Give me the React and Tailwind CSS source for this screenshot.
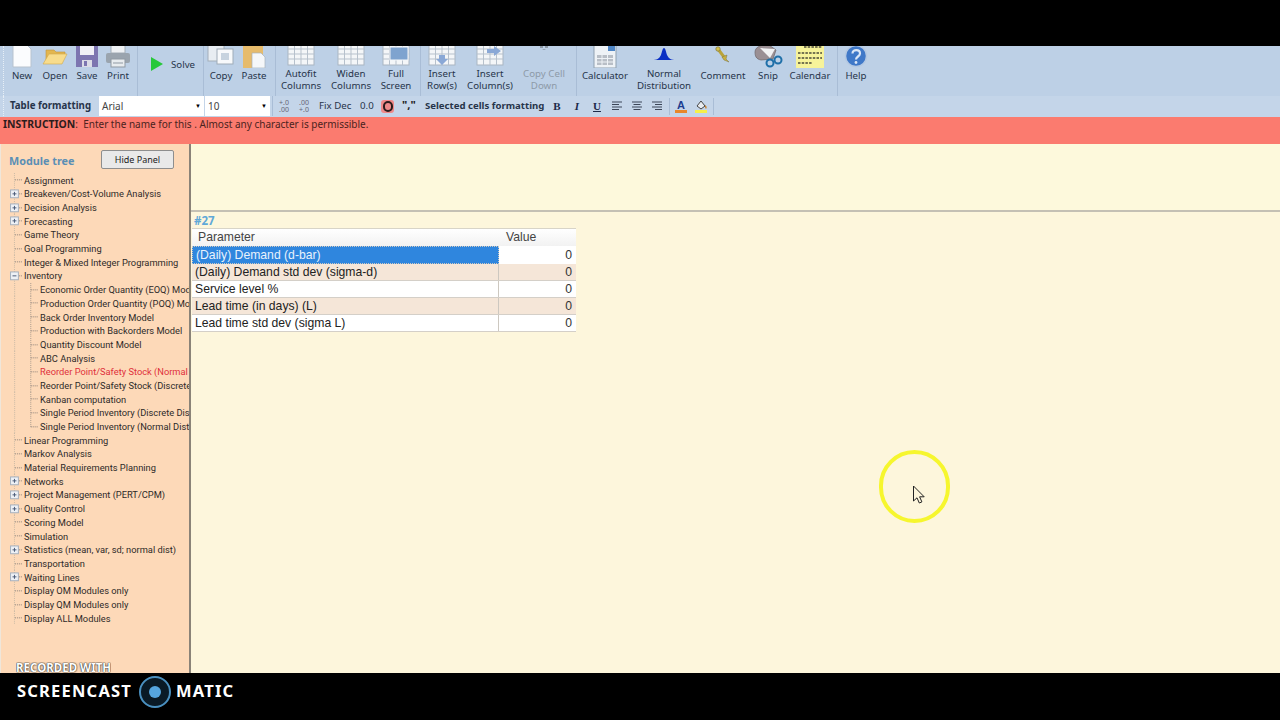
import React from "react";

const GridIcon = ({ children }) => (
  <svg viewBox="0 0 32 22" className="w-8 h-[22px]">
    <rect x="3" y="-2" width="26" height="21" fill="#f4f6f8" stroke="#aab5c2" />
    <path d="M3 3h26M3 8h26M3 13h26M9.5 -2v21M16 -2v21M22.5 -2v21" stroke="#b7c1cc" fill="none" />
    {children}
  </svg>
);

const icons = {
  new: (
    <svg viewBox="0 0 32 22" className="w-8 h-[22px]">
      <path d="M7 -2h13l5 5v18H7z" fill="#fbfcfe" stroke="#b8c3cf" />
    </svg>
  ),
  open: (
    <svg viewBox="0 0 32 22" className="w-8 h-[22px]">
      <path d="M7 18V4h8l2 2h9v4H12z" fill="#e3b64f" stroke="#c2963a" strokeWidth="0.6" />
      <path d="M4 18l6-10h18l-5 10z" fill="#f8dc8c" stroke="#d2a94c" strokeWidth="0.6" />
    </svg>
  ),
  save: (
    <svg viewBox="0 0 32 22" className="w-8 h-[22px]">
      <path d="M5 -2h22v23H5z" fill="#7d75b0" />
      <rect x="9" y="-2" width="14" height="11" fill="#f0eff6" />
      <rect x="11" y="14" width="10" height="7" fill="#dcdce6" />
      <rect x="13" y="15" width="3" height="5" fill="#7d75b0" />
    </svg>
  ),
  print: (
    <svg viewBox="0 0 32 22" className="w-8 h-[22px]">
      <rect x="9" y="-2" width="14" height="9" fill="#eef1f4" stroke="#a4adb6" />
      <rect x="4" y="7" width="24" height="10" rx="2" fill="#9aa4ae" />
      <rect x="9" y="13" width="14" height="8" fill="#e8ecef" stroke="#8f99a3" />
      <path d="M11 17h10" stroke="#8f99a3" />
    </svg>
  ),
  solve: (
    <svg viewBox="0 0 14 16" className="w-[14px] h-4">
      <path d="M1 1l12 7-12 7z" fill="#27c83a" />
    </svg>
  ),
  copy: (
    <svg viewBox="0 0 32 22" className="w-8 h-[22px]">
      <rect x="3" y="-2" width="16" height="17" fill="#e8edf2" stroke="#a3aeb9" />
      <rect x="12" y="3" width="16" height="15" fill="#f7f9fb" stroke="#a0acb8" />
      <rect x="16" y="7" width="8" height="7" fill="#c7d3df" />
    </svg>
  ),
  paste: (
    <svg viewBox="0 0 32 22" className="w-8 h-[22px]">
      <rect x="5" y="-2" width="20" height="24" fill="#e6bb6c" />
      <path d="M14 7h9l4 4v11H14z" fill="#f5f7f9" stroke="#a8b2bc" strokeWidth="0.7" />
    </svg>
  ),
  autofit: <GridIcon />,
  widen: <GridIcon />,
  full: (
    <GridIcon>
      <rect x="10" y="1" width="18" height="13" fill="#7ea3cf" stroke="#f4f6f8" />
    </GridIcon>
  ),
  insRow: (
    <GridIcon>
      <path d="M13 9h6v4h3l-6 6-6-6h3z" fill="#8aa8d6" />
    </GridIcon>
  ),
  insCol: (
    <GridIcon>
      <path d="M13 3h7V0l7 5-7 5V7h-7z" fill="#8aa8d6" />
    </GridIcon>
  ),
  copyDown: (
    <svg viewBox="0 0 32 22" className="w-8 h-[22px]">
      <path d="M12 0h3v2h-3zM17 0h3v2h-3zM14 3h4l-2 1z" fill="#8d99a6" />
    </svg>
  ),
  calc: (
    <svg viewBox="0 0 32 22" className="w-8 h-[22px]">
      <rect x="5" y="-2" width="22" height="24" fill="#eef2f6" stroke="#8fa0b0" />
      <rect x="8" y="9" width="16" height="10" fill="#b8bec6" />
      <path d="M8 12.5h16M8 16h16M13 9v10M18.5 9v10" stroke="#eef2f6" />
      <rect x="19" y="-2" width="7" height="7" fill="#4f86c6" />
    </svg>
  ),
  normal: (
    <svg viewBox="0 0 32 22" className="w-8 h-[22px]">
      <path d="M4 14c5 0 7-1 9-5 1-3 1.5-7 3-7s2 4 3 7c2 4 4 5 9 5z" fill="#0a2fc4" />
    </svg>
  ),
  comment: (
    <svg viewBox="0 0 32 22" className="w-8 h-[22px]">
      <path d="M11 3l6 8" stroke="#b9a33a" strokeWidth="3" />
      <circle cx="11" cy="3" r="2.2" fill="#d6c24a" stroke="#7d7442" strokeWidth="0.7" />
      <path d="M15 11l5-2-1 4 3 3-5-2z" fill="#c9b13e" stroke="#7d7442" strokeWidth="0.5" />
    </svg>
  ),
  snip: (
    <svg viewBox="0 0 32 22" className="w-8 h-[22px]">
      <path d="M3 6c0-6 9-8 14-7l7 5-3 9-12 1C4 13 3 10 3 6z" fill="#9a8f94" stroke="#6d6468" strokeWidth="0.7" />
      <path d="M8 2l10 10 5-9z" fill="#f2f2f4" />
      <circle cx="18" cy="17" r="3.5" fill="none" stroke="#1f6fa8" strokeWidth="2" />
      <circle cx="26" cy="14" r="3.5" fill="none" stroke="#1f6fa8" strokeWidth="2" />
    </svg>
  ),
  calendar: (
    <svg viewBox="0 0 32 22" className="w-8 h-[22px]">
      <rect x="2" y="-2" width="28" height="25" fill="#f7f39a" />
      <path d="M10 1h18M4 7h24M4 12h24M4 17h14" stroke="#4b4b3a" strokeWidth="1.6" strokeDasharray="2.5 1.2" />
    </svg>
  ),
  help: (
    <svg viewBox="0 0 32 22" className="w-8 h-[22px]">
      <circle cx="16" cy="10" r="10.5" fill="#3f78c8" stroke="#b4c8e2" strokeWidth="1.5" />
      <path d="M12.5 7.5c0-4.5 7.5-4.5 7.500 0 0 3-4 3-4 6" fill="none" stroke="#dbe6f6" strokeWidth="2.2" />
      <circle cx="16" cy="16.5" r="1.4" fill="#dbe6f6" />
    </svg>
  ),
};

const toolGroups = [
  {
    width: "w-[132px]",
    items: [
      { icon: "new", lines: ["New"], width: "w-8" },
      { icon: "open", lines: ["Open"], width: "w-[34px]" },
      { icon: "save", lines: ["Save"], width: "w-[30px]" },
      { icon: "print", lines: ["Print"], width: "w-8" },
    ],
  },
  { solve: true, width: "w-[66px]" },
  {
    width: "w-[72px]",
    items: [
      { icon: "copy", lines: ["Copy"], width: "w-[34px]" },
      { icon: "paste", lines: ["Paste"], width: "w-8" },
    ],
  },
  {
    width: "w-[145px]",
    items: [
      { icon: "autofit", lines: ["Autofit", "Columns"], width: "w-[50px]" },
      { icon: "widen", lines: ["Widen", "Columns"], width: "w-[50px]" },
      { icon: "full", lines: ["Full", "Screen"], width: "w-10" },
    ],
  },
  {
    width: "w-[156px]",
    items: [
      { icon: "insRow", lines: ["Insert", "Row(s)"], width: "w-[42px]" },
      { icon: "insCol", lines: ["Insert", "Column(s)"], width: "w-[54px]" },
      { icon: "copyDown", lines: ["Copy Cell", "Down"], width: "w-[54px]", muted: true },
    ],
  },
  {
    width: "w-[261px]",
    items: [
      { icon: "calc", lines: ["Calculator"], width: "w-14" },
      { icon: "normal", lines: ["Normal", "Distribution"], width: "w-[62px]" },
      { icon: "comment", lines: ["Comment"], width: "w-14" },
      { icon: "snip", lines: ["Snip"], width: "w-[34px]" },
      { icon: "calendar", lines: ["Calendar"], width: "w-[50px]" },
    ],
  },
  {
    width: "w-9",
    last: true,
    items: [{ icon: "help", lines: ["Help"], width: "w-9" }],
  },
];

const treeRows = [
  { label: "Assignment", kind: "leaf" },
  { label: "Breakeven/Cost-Volume Analysis", kind: "plus" },
  { label: "Decision Analysis", kind: "plus" },
  { label: "Forecasting", kind: "plus" },
  { label: "Game Theory", kind: "leaf" },
  { label: "Goal Programming", kind: "leaf" },
  { label: "Integer & Mixed Integer Programming", kind: "leaf" },
  { label: "Inventory", kind: "minus" },
  { label: "Economic Order Quantity (EOQ) Model", kind: "child" },
  { label: "Production Order Quantity (POQ) Model", kind: "child" },
  { label: "Back Order Inventory Model", kind: "child" },
  { label: "Production with Backorders Model", kind: "child" },
  { label: "Quantity Discount Model", kind: "child" },
  { label: "ABC Analysis", kind: "child" },
  { label: "Reorder Point/Safety Stock (Normal Distribution)", kind: "child", active: true },
  { label: "Reorder Point/Safety Stock (Discrete Distribution)", kind: "child" },
  { label: "Kanban computation", kind: "child" },
  { label: "Single Period Inventory (Discrete Distribution)", kind: "child" },
  { label: "Single Period Inventory (Normal Distribution)", kind: "child", last: true },
  { label: "Linear Programming", kind: "leaf" },
  { label: "Markov Analysis", kind: "leaf" },
  { label: "Material Requirements Planning", kind: "leaf" },
  { label: "Networks", kind: "plus" },
  { label: "Project Management (PERT/CPM)", kind: "plus" },
  { label: "Quality Control", kind: "plus" },
  { label: "Scoring Model", kind: "leaf" },
  { label: "Simulation", kind: "leaf" },
  { label: "Statistics (mean, var, sd; normal dist)", kind: "plus" },
  { label: "Transportation", kind: "leaf" },
  { label: "Waiting Lines", kind: "plus" },
  { label: "Display OM Modules only", kind: "leaf" },
  { label: "Display QM Modules only", kind: "leaf" },
  { label: "Display ALL Modules", kind: "leaf" },
];

const params = [
  { name: "(Daily) Demand (d-bar)", rowClass: "h-[18px] bg-white", nameClass: "bg-[#2f86de] text-[#e8f2fc] border border-dotted border-[#1d4f8a]" },
  { name: "(Daily) Demand std dev (sigma-d)", rowClass: "h-[17px] border-b border-[#d4cfc8] bg-[#f5e6d8]", nameClass: "text-[#222]" },
  { name: "Service level %", rowClass: "h-[17px] border-b border-[#d4cfc8] bg-white", nameClass: "text-[#222]" },
  { name: "Lead time (in days) (L)", rowClass: "h-[17px] border-b border-[#d4cfc8] bg-[#f5e6d8]", nameClass: "text-[#222]" },
  { name: "Lead time std dev (sigma L)", rowClass: "h-[17px] border-b border-[#d4cfc8] bg-white", nameClass: "text-[#222]" },
];

const TreeConnector = ({ kind, last }) => {
  if (kind === "child") {
    return (
      <svg viewBox="0 0 40 14" className="w-10 h-[13.7px] shrink-0">
        <path d="M13.5 0v14" stroke="#c9b8a4" strokeDasharray="1 1" fill="none" />
        <path d={last ? "M30 0v7" : "M30 0v14"} stroke="#a89a8c" strokeDasharray="1 1" fill="none" />
        <path d="M30 7h8" stroke="#8a8078" strokeDasharray="1 1" fill="none" />
      </svg>
    );
  }
  return (
    <svg viewBox="0 0 24 14" className="w-6 h-[13.7px] shrink-0">
      <path d="M13.5 0v14" stroke="#c9b8a4" strokeDasharray="1 1" fill="none" />
      <path d="M14 7h8" stroke="#8a8078" strokeDasharray="1 1" fill="none" />
      {kind !== "leaf" && (
        <>
          <rect x="9.5" y="3" width="8" height="8" fill="#eef1f6" stroke="#a4afbd" />
          <path d="M11.5 7h4" stroke="#4a5a78" />
          {kind === "plus" && <path d="M13.5 5v4" stroke="#4a5a78" />}
        </>
      )}
    </svg>
  );
};

const ToolItem = ({ item }) => (
  <div className={`${item.width} shrink-0 flex flex-col items-center`}>
    {icons[item.icon]}
    <div
      className={`${item.lines.length > 1 ? "mt-0" : "mt-[2px]"} text-[9.7px] leading-[12px] whitespace-nowrap text-center ${
        item.muted ? "text-[#8d9aa8]" : "text-[#27344a]"
      }`}
    >
      {item.lines.map((line) => (
        <div key={line}>{line}</div>
      ))}
    </div>
  </div>
);

const App = () => {
  return (
    <div className="relative w-[1280px] h-[720px] overflow-hidden bg-black flex flex-col font-['Noto_Sans','Open_Sans',sans-serif]">
      <div className="h-[46px] shrink-0 bg-black" />

      {/* Main toolbar */}
      <div className="h-[50px] shrink-0 bg-[#bdd0e6] flex overflow-hidden">
        <div className="w-[3px] ml-[3px] border-l border-dotted border-[#e6eef6] shrink-0" />
        {toolGroups.map((group, i) => (
          <div
            key={i}
            className={`${group.width} shrink-0 h-full flex ${group.last ? "" : "border-r border-[#a9bdd6]"}`}
          >
            {group.solve ? (
              <div className="w-full flex items-start pl-[12px] gap-[7px]">
                <div className="mt-[10px]">{icons.solve}</div>
                <span className="text-[9.7px] leading-[12px] text-[#27344a] mt-[13px]">Solve</span>
              </div>
            ) : (
              group.items.map((item) => <ToolItem key={item.icon} item={item} />)
            )}
          </div>
        ))}
      </div>

      {/* Format bar */}
      <div className="h-[21px] shrink-0 bg-[#c4d5e9] flex items-center pb-[1px] text-[10px] text-[#27344a] pl-[3px]">
        <div className="w-[3px] h-full border-l border-dotted border-[#e6eef6] shrink-0 mr-[4px]" />
        <span className="w-[89px] font-bold text-[9.7px] shrink-0 whitespace-nowrap">Table formatting</span>
        <div className="w-[105px] h-full shrink-0 bg-white flex items-center justify-between px-[3px] mr-px">
          <span className="text-[#444]">Arial</span>
          <span className="text-[6px] text-black">▼</span>
        </div>
        <div className="w-[65px] h-full shrink-0 bg-white flex items-center justify-between px-[3px]">
          <span className="text-[#444]">10</span>
          <span className="text-[6px] text-black">▼</span>
        </div>
        <div className="w-[3px] h-full border-r border-[#a9bdd6] mr-[1px] shrink-0" />
        <div className="w-5 text-[7px] leading-[7px] text-[#667] text-center shrink-0">
          <div>+.0</div>
          <div>.00</div>
        </div>
        <div className="w-5 text-[7px] leading-[7px] text-[#667] text-center shrink-0">
          <div>.00</div>
          <div>+.0</div>
        </div>
        <span className="ml-[5px] w-[41px] shrink-0 whitespace-nowrap text-[9.7px]">Fix Dec</span>
        <span className="w-[21px] shrink-0 text-[9.7px]">0.0</span>
        <span className="w-[13px] h-[13px] rounded-[3px] bg-[#ee8a8a] flex items-center justify-center shrink-0">
          <span className="w-[10px] h-[11px] rounded-full border-2 border-[#2a1c1c]" />
        </span>
        <span className="ml-[8px] w-[23px] shrink-0 font-bold text-[11px] text-[#222] whitespace-nowrap -mt-[1px]">","</span>
        <span className="w-[122px] shrink-0 whitespace-nowrap font-bold text-[9.6px]">Selected cells formatting</span>
        <div className="w-5 font-['Liberation_Serif',serif] font-bold text-[11px] text-[#1c2a4a] shrink-0 text-center">B</div>
        <div className="w-5 font-['Liberation_Serif',serif] font-bold italic text-[11px] text-[#1c2a4a] shrink-0 text-center">I</div>
        <div className="w-5 font-['Liberation_Serif',serif] font-bold underline text-[11px] text-[#1c2a4a] shrink-0 text-center">U</div>
        <svg viewBox="0 0 20 12" className="w-5 h-3 shrink-0">
          <path d="M5 2h10M5 4.5h7M5 7h10M5 9.5h7" stroke="#3c4658" />
        </svg>
        <svg viewBox="0 0 20 12" className="w-5 h-3 shrink-0">
          <path d="M5 2h10M6.5 4.5h7M5 7h10M6.5 9.5h7" stroke="#3c4658" />
        </svg>
        <svg viewBox="0 0 20 12" className="w-5 h-3 shrink-0">
          <path d="M5 2h10M8 4.5h7M5 7h10M8 9.5h7" stroke="#3c4658" />
        </svg>
        <div className="w-[3px] h-[17px] border-r border-[#a9bdd6] mr-[4px] shrink-0" />
        <svg viewBox="0 0 14 15" className="w-[14px] h-[15px] shrink-0 mr-[6px]">
          <text x="7" y="10" textAnchor="middle" fontSize="11" fontWeight="700" fill="#1c3d90" fontFamily="Liberation Sans">A</text>
          <rect x="1" y="11" width="12" height="3" fill="#e8872c" />
        </svg>
        <svg viewBox="0 0 14 15" className="w-[14px] h-[15px] shrink-0">
          <path d="M3 7l4-5 4 5-4 3z" fill="#e8ecf0" stroke="#444" />
          <path d="M11 6c2 1 2 3 1 4-1-1-1-2-1-4z" fill="#c9822c" />
          <rect x="1" y="11" width="12" height="3" fill="#f5f04a" />
        </svg>
        <div className="w-[6px] h-[17px] border-r border-[#a9bdd6] shrink-0" />
      </div>

      {/* Instruction bar */}
      <div className="h-[27px] shrink-0 bg-[#fb7b6f] pl-[3px] text-[10px] leading-[14px] text-[#4a2320] whitespace-nowrap">
        <span className="font-bold text-[#2d1c1c] text-[10.4px]">INSTRUCTION</span>:&nbsp; Enter the name for this . Almost any character is permissible.
      </div>

      <div className="flex-1 flex min-h-0">
        {/* Module tree */}
        <div className="w-[191px] shrink-0 bg-[#fdd9b8] border-r-2 border-[#8a8378] border-l border-l-[#efe6da] overflow-hidden">
          <div className="h-[29.3px] flex items-start pl-[8px]">
            <span className="mt-[10px] text-[10.8px] leading-[14px] font-bold text-[#5b8fb5] w-[92px] shrink-0">Module tree</span>
            <button className="mt-[6px] w-[73px] h-[19px] pt-[1px] rounded-[2px] border border-[#8e8e8e] bg-[#e9e9e9] text-[9px] text-[#222] flex items-center justify-center">
              Hide Panel
            </button>
          </div>
          <div className="w-[188px] overflow-hidden">
            {treeRows.map((row) => (
              <div
                key={row.label}
                className={`h-[13.7px] flex items-center whitespace-nowrap font-['Roboto',sans-serif] text-[9.3px] leading-[13px] ${
                  row.active ? "text-[#e0303a]" : "text-[#2d2a28]"
                }`}
              >
                <TreeConnector kind={row.kind} last={row.last} />
                <span className="-ml-[1px]">{row.label}</span>
              </div>
            ))}
          </div>
        </div>

        {/* Data area */}
        <div className="flex-1 flex flex-col bg-[#fdf6dc] min-w-0">
          <div className="h-[68px] shrink-0 bg-[#fdf9dc] border-b-2 border-[#c4c0b4]" />
          <div className="pl-[1px]">
            <div className="h-[16px] pl-[2px] text-[11.5px] leading-[17px] font-bold text-[#5fa8d8]">#27</div>
            <div className="w-[384px] font-['Liberation_Sans',Arial,sans-serif] text-[12.2px]">
              <div className="h-[18px] flex items-center bg-gradient-to-b from-white to-[#f2f2f2] border-t border-[#d8d4c8] text-[#444]">
                <span className="w-[307px] pl-[6px]">Parameter</span>
                <span className="pl-[7px]">Value</span>
              </div>
              {params.map((p) => (
                <div key={p.name} className={`flex ${p.rowClass}`}>
                  <div className={`w-[307px] h-full pl-[3px] pt-[1px] flex items-center border-r border-[#cdc8c0] ${p.nameClass}`}>
                    {p.name}
                  </div>
                  <div className="flex-1 flex items-center justify-end pr-[4px] pt-[1px] text-[#333]">0</div>
                </div>
              ))}
            </div>
          </div>
        </div>
      </div>

      {/* Recorder footer */}
      <div className="h-[47px] shrink-0 bg-black flex items-center pl-[17px] pb-[10px] text-white font-['Noto_Sans',sans-serif]">
        <span className="text-[16.5px] font-bold tracking-[1.2px] w-[122px] shrink-0">SCREENCAST</span>
        <span className="w-[32px] h-[32px] rounded-full border-2 border-[#4a90c0] flex items-center justify-center shrink-0 bg-[#0a1a26]">
          <span className="w-[12px] h-[12px] rounded-full bg-[#55a5df]" />
        </span>
        <span className="ml-[5px] text-[16.5px] font-bold tracking-[1.2px]">MATIC</span>
      </div>

      <div className="absolute left-[16px] top-[662px] h-[11px] overflow-hidden text-[11.5px] leading-[12px] font-bold text-white [text-shadow:0_0_2px_#222,0_0_1px_#222] whitespace-nowrap">
        RECORDED WITH
      </div>

      {/* Cursor highlight */}
      <div className="absolute left-[879px] top-[450px] w-[71px] h-[73px] rounded-full border-4 border-[#f6f62e] blur-[0.5px]" />
      <svg viewBox="0 0 14 20" className="absolute left-[912px] top-[485px] w-[14px] h-[20px]">
        <path d="M1.5 1v15l3.5-3.2 2.3 5.2 2.6-1.1-2.3-5.1h4.6z" fill="#fdf6dc" stroke="#222" strokeWidth="1" />
      </svg>
    </div>
  );
};

export default App;
